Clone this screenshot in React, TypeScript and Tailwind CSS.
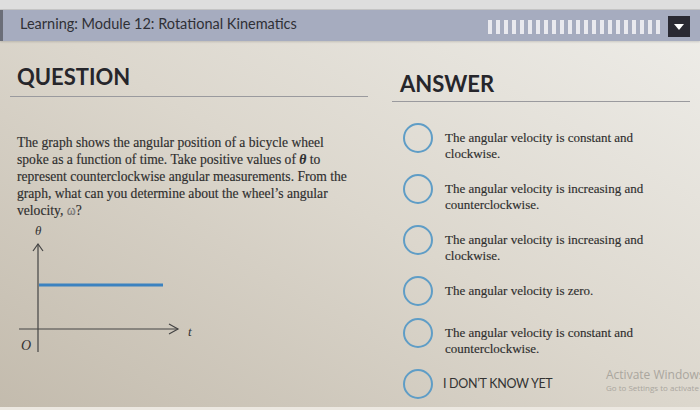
import React from "react";

const options = [
  "The angular velocity is constant and clockwise.",
  "The angular velocity is increasing and counterclockwise.",
  "The angular velocity is increasing and clockwise.",
  "The angular velocity is zero.",
  "The angular velocity is constant and counterclockwise.",
];

function Circle() {
  return <div className="w-[30px] h-[30px] shrink-0 rounded-full border-[2.5px] border-[#5f9dc6]" />;
}

function Graph() {
  return (
    <svg width="200" height="135" viewBox="0 0 200 135" className="block">
      <text x="35" y="13" fontFamily="'Liberation Serif', serif" fontStyle="italic" fontSize="13" fill="#333">θ</text>
      <line x1="38" y1="22" x2="38" y2="130" stroke="#444" strokeWidth="1.2" />
      <polyline points="33,29 38,22 43,29" fill="none" stroke="#444" strokeWidth="1.2" />
      <line x1="19" y1="107" x2="178" y2="107" stroke="#444" strokeWidth="1.2" />
      <polyline points="169,102 178,107 169,112" fill="none" stroke="#444" strokeWidth="1.2" />
      <line x1="39" y1="63" x2="163" y2="63" stroke="#3b82c0" strokeWidth="3" />
      <text x="188" y="114" fontFamily="'Liberation Serif', serif" fontStyle="italic" fontSize="13" fill="#333">t</text>
      <text x="21" y="128" fontFamily="'Liberation Serif', serif" fontStyle="italic" fontSize="14" fill="#333">O</text>
    </svg>
  );
}

export default function App() {
  return (
    <div className="relative w-[700px] h-[410px] overflow-hidden bg-linear-to-tr from-[#c3bbad] via-[#dcd7cd] to-[#efeeea] font-['Lato',sans-serif]">
      <div className="h-[10px] bg-[#dedede] border-b border-[#c6c6c6]" />
      <div className="h-[31px] bg-[#a6acbf] flex items-center pl-[17px] pr-[10px] border-l-[3px] border-[#6b6e78] shadow-[0_1px_2px_rgba(0,0,0,0.15)]">
        <span className="text-[14.5px] text-[#2f3036] leading-none -mt-[3px]">Learning: Module 12: Rotational Kinematics</span>
        <div className="ml-auto flex items-center gap-[4px] mr-[8px] mt-[2px]">
          {Array.from({ length: 22 }).map((_, i) => (
            <div key={i} className="w-[4px] h-[14px] bg-[#e9e9ee]" />
          ))}
        </div>
        <div className="w-[22px] h-[21px] bg-[#2a2a33] flex items-center justify-center mt-[2px]">
          <div className="w-0 h-0 border-l-[5px] border-r-[5px] border-t-[6px] border-l-transparent border-r-transparent border-t-white" />
        </div>
      </div>

      <div className="flex">
        <div className="w-[358px] ml-[10px] shrink-0">
          <div className="mt-[22px] pl-[7px] pb-[5px] border-b border-[#9a9a9e]">
            <h1 className="text-[22px] leading-[28px] font-bold text-[#26262b]">QUESTION</h1>
          </div>
          <p className="mt-[37px] pl-[7px] text-[13.6px] leading-[17px] text-[#2e2e2e] font-['Liberation_Serif',serif] whitespace-nowrap [-webkit-text-stroke:0.15px_#2e2e2e]">
            The graph shows the angular position of a bicycle wheel<br />
            spoke as a function of time. Take positive values of <i className="font-bold">θ</i> to<br />
            represent counterclockwise angular measurements. From the<br />
            graph, what can you determine about the wheel’s angular<br />
            velocity, <span className="text-[#888]">ω</span>?
          </p>
          <div className="mt-[3px] -ml-[10px]">
            <Graph />
          </div>
        </div>

        <div className="ml-[24px] w-[298px] shrink-0">
          <div className="mt-[29px] pl-[8px] pb-[3px] border-b border-[#9a9a9e]">
            <h2 className="text-[22px] leading-[28px] font-bold text-[#26262b]">ANSWER</h2>
          </div>
          <div className="mt-[21px] ml-[11px] flex flex-col gap-3">
            {options.map((o) => (
              <div key={o} className="flex items-start gap-3">
                <Circle />
                <div className="pt-[7px] w-[215px] text-[13px] leading-[16px] text-[#2e2e2e] font-['Liberation_Serif',serif] [-webkit-text-stroke:0.15px_#2e2e2e]">{o}</div>
              </div>
            ))}
            <div className="flex items-center gap-[10px]">
              <Circle />
              <div className="text-[12.5px] text-[#333] tracking-[-0.3px]">I DON’T KNOW YET</div>
            </div>
          </div>
        </div>
      </div>

      <div className="absolute left-[606px] top-[368px] text-[#aaa69e] whitespace-nowrap font-['Open_Sans',sans-serif]">
        <div className="text-[12px] leading-[14px]">Activate Windows</div>
        <div className="text-[8px] leading-[11px]">Go to Settings to activate Windows.</div>
      </div>
      <div className="absolute left-0 right-0 bottom-0 h-[3px] bg-[#ece8e1]" />
    </div>
  );
}
